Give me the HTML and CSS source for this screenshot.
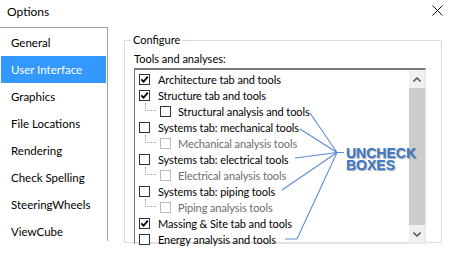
FILE: index.html
```html
<!DOCTYPE html>
<html>
<head>
<meta charset="utf-8">
<link rel="stylesheet" href="styles.css">
</head>
<body>
<div class="dialog">
  <div class="titlebar">
    <span class="title">Options</span>
    <svg class="close" width="11" height="11" viewBox="0 0 11 11"><path d="M0.5 0.5 L10.5 10.5 M10.5 0.5 L0.5 10.5" stroke="#111" stroke-width="1" fill="none"/></svg>
  </div>
  <div class="main">
    <nav class="nav">
      <div class="nav-item">General</div>
      <div class="nav-item selected">User Interface</div>
      <div class="nav-item">Graphics</div>
      <div class="nav-item">File Locations</div>
      <div class="nav-item">Rendering</div>
      <div class="nav-item">Check Spelling</div>
      <div class="nav-item">SteeringWheels</div>
      <div class="nav-item">ViewCube</div>
    </nav>
    <div class="content">
      <div class="group">
        <div class="legend">Configure</div>
        <div class="label">Tools and analyses:</div>
        <div class="listbox">
          <div class="items">
            <div class="row"><span class="cb"><svg viewBox="0 0 9 9"><path d="M1.3 4.3 L3.6 6.7 L7.8 1.6" /></svg></span><span class="txt">Architecture tab and tools</span></div>
            <div class="row"><span class="cb"><svg viewBox="0 0 9 9"><path d="M1.3 4.3 L3.6 6.7 L7.8 1.6" /></svg></span><span class="txt">Structure tab and tools</span></div>
            <div class="row child"><span class="tree"></span><span class="cb"></span><span class="txt">Structural analysis and tools</span></div>
            <div class="row"><span class="cb"></span><span class="txt">Systems tab: mechanical tools</span></div>
            <div class="row child disabled"><span class="tree"></span><span class="cb"></span><span class="txt">Mechanical analysis tools</span></div>
            <div class="row"><span class="cb"></span><span class="txt">Systems tab: electrical tools</span></div>
            <div class="row child disabled"><span class="tree"></span><span class="cb"></span><span class="txt">Electrical analysis tools</span></div>
            <div class="row"><span class="cb"></span><span class="txt">Systems tab: piping tools</span></div>
            <div class="row child disabled"><span class="tree"></span><span class="cb"></span><span class="txt">Piping analysis tools</span></div>
            <div class="row"><span class="cb"><svg viewBox="0 0 9 9"><path d="M1.3 4.3 L3.6 6.7 L7.8 1.6" /></svg></span><span class="txt">Massing &amp; Site tab and tools</span></div>
            <div class="row"><span class="cb"></span><span class="txt">Energy analysis and tools</span></div>
          </div>
          <div class="scrollbar">
            <div class="sb-btn"><svg width="8" height="5" viewBox="0 0 8 5"><path d="M0.5 4.5 L4 1 L7.5 4.5"/></svg></div>
            <div class="thumb"></div>
            <div class="sb-btn"><svg width="8" height="5" viewBox="0 0 8 5"><path d="M0.5 0.5 L4 4 L7.5 0.5"/></svg></div>
          </div>
        </div>
      </div>
    </div>
  </div>
  <svg class="callout-lines" width="456" height="253" viewBox="0 0 456 253">
    <path d="M310 113 L337 152.5 M300 129 L337 152.5 M295 158 L337 152.5 M282 190 L337 152.5 M285 239 L297 239 L337 152.5 M337 152.5 L344 152.5"/>
  </svg>
  <div class="callout"><div class="callout-line">UNCHECK</div><div class="callout-line">BOXES</div></div>
</div>
</body>
</html>
```
FILE: styles.css
```css
html, body {
  margin: 0;
  padding: 0;
  background: #fff;
}
body {
  font-family: Lato, "Open Sans", sans-serif;
  color: #000;
}
.dialog {
  position: relative;
  width: 456px;
  height: 253px;
  overflow: hidden;
  background: #fff;
}
.titlebar {
  height: 27px;
  display: flex;
  align-items: center;
  justify-content: space-between;
  padding: 0 13px 0 7px;
  box-sizing: border-box;
}
.title {
  font-size: 12px;
  margin-top: -5px;
}
.close {
  display: block;
  margin-top: -6px;
}
.main {
  display: flex;
  height: 226px;
}
.nav {
  width: 108px;
  height: 214px;
  box-sizing: border-box;
  border-top: 1px solid #a0a0a0;
  border-right: 1px solid #a0a0a0;
  padding: 1px 0 0 1px;
}
.nav-item {
  height: 27px;
  line-height: 27px;
  padding-left: 10px;
  font-size: 11.5px;
  margin-right: 1px;
}
.nav-item.selected {
  background: #3399ff;
  color: #fff;
}
.content {
  flex: 1;
  padding: 13px 0 0 16px;
}
.group {
  width: 318px;
  height: 203px;
  box-sizing: border-box;
  border: 1px solid #dcdcdc;
  padding: 0 15px 0 9px;
}
.legend {
  width: fit-content;
  margin: -9px 0 0 -3px;
  padding: 0 2px;
  background: #fff;
  line-height: 16px;
  font-size: 11px;
}
.label {
  margin-top: 3px;
  line-height: 16px;
  font-size: 11px;
}
.listbox {
  margin-top: 1px;
  height: 176px;
  box-sizing: border-box;
  display: flex;
  border-top: 2px solid #7a7a7a;
  border-left: 1px solid #7a7a7a;
  border-right: 1px solid #e6e6e6;
  border-bottom: 1px solid #e6e6e6;
}
.items {
  flex: 1;
  padding: 1px 0 0 4px;
}
.row {
  height: 16px;
  display: flex;
  align-items: center;
  font-size: 11px;
  letter-spacing: -0.1px;
  white-space: nowrap;
}
.cb {
  width: 11px;
  height: 11px;
  box-sizing: border-box;
  border: 1px solid #333;
  background: #fff;
  margin-right: 8px;
  flex: none;
}
.cb svg {
  display: block;
  width: 9px;
  height: 9px;
}
.cb path {
  fill: none;
  stroke: #000;
  stroke-width: 1.8;
}
.child {
  padding-left: 6px;
}
.child .cb {
  margin-right: 7px;
}
.tree {
  align-self: flex-start;
  margin-top: 0;
  width: 10px;
  height: 7px;
  border-left: 1px dotted #a0a0a0;
  border-bottom: 1px dotted #a0a0a0;
  margin-right: 4px;
  flex: none;
  box-sizing: content-box;
}
.disabled .txt {
  color: #6d6d6d;
}
.disabled .cb {
  border-color: #bcbcbc;
}
.scrollbar {
  width: 16px;
  display: flex;
  flex-direction: column;
  background: #f0f0f0;
}
.sb-btn {
  height: 18px;
  display: flex;
  align-items: center;
  justify-content: center;
}
.sb-btn path {
  fill: none;
  stroke: #606060;
  stroke-width: 1.6;
}
.thumb {
  flex: 1;
  background: #cdcdcd;
}
.callout-lines {
  position: absolute;
  left: 0;
  top: 0;
  pointer-events: none;
}
.callout-lines path {
  fill: none;
  stroke: #5a8cd4;
  stroke-width: 1.1;
}
.callout {
  position: absolute;
  left: 346px;
  top: 147px;
  font-family: "Liberation Sans", Arial, sans-serif;
  font-weight: bold;
  font-size: 14px;
  color: #3b79cb;
  text-shadow: 1px 1px 1px rgba(0, 0, 0, 0.35);
}
.callout-line {
  height: 12px;
  line-height: 12px;
}
```
